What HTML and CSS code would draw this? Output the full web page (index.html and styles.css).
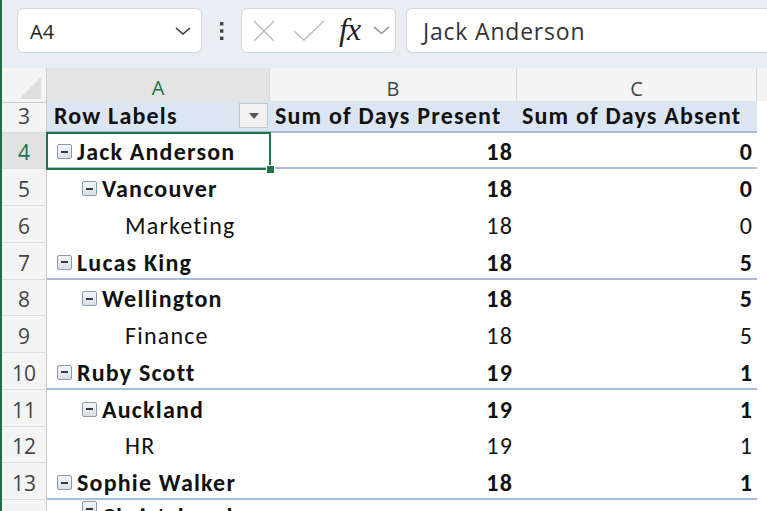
FILE: index.html
```html
<!DOCTYPE html>
<html>
<head>
<meta charset="utf-8">
<link rel="stylesheet" href="styles.css">
</head>
<body>
<div class="app">
  <div class="toolbar">
    <div class="namebox">
      <span class="ref">A4</span>
      <svg class="chev" width="18" height="10" viewBox="0 0 18 10"><path d="M2 2 L9 8 L16 2" fill="none" stroke="#333" stroke-width="1.6"/></svg>
    </div>
    <div class="dots">
      <svg width="6" height="20" viewBox="0 0 6 20"><rect x="1" y="1" width="3.4" height="3.4" fill="#444"/><rect x="1" y="8.3" width="3.4" height="3.4" fill="#444"/><rect x="1" y="15.6" width="3.4" height="3.4" fill="#444"/></svg>
    </div>
    <div class="fxbox">
      <svg class="ic-x" width="24" height="22" viewBox="0 0 24 22"><path d="M2 1 L22 21 M22 1 L2 21" stroke="#b9b9b9" stroke-width="1.3" fill="none"/></svg>
      <svg class="ic-ok" width="32" height="22" viewBox="0 0 32 22"><path d="M1 11 L11 20 L31 1" stroke="#b9b9b9" stroke-width="1.3" fill="none"/></svg>
      <span class="fx">fx</span>
      <svg class="chev2" width="17" height="9" viewBox="0 0 17 9"><path d="M1 1 L8.5 7.5 L16 1" fill="none" stroke="#888" stroke-width="1.3"/></svg>
    </div>
    <div class="formula">Jack Anderson</div>
  </div>

  <div class="sheet">
    <div class="row colhead">
      <div class="corner"><span class="tri"></span></div>
      <div class="ch sel">A</div>
      <div class="ch">B</div>
      <div class="ch">C</div>
      <div class="ch last"></div>
    </div>

    <div class="row r3">
      <div class="rh">3</div>
      <div class="c ph lbl">Row Labels<span class="dd"><svg width="10" height="6" viewBox="0 0 10 6"><path d="M0 0 H10 L5 6 Z" fill="#555"/></svg></span></div>
      <div class="c ph">Sum of Days Present</div>
      <div class="c ph">Sum of Days Absent</div>
      <div class="c e"></div>
    </div>

    <div class="row grp">
      <div class="rh selr">4</div>
      <div class="c b l1 active"><span class="mn"></span>Jack Anderson</div>
      <div class="c b n">18</div>
      <div class="c b n">0</div>
      <div class="c e"></div>
    </div>
    <div class="row">
      <div class="rh">5</div>
      <div class="c b l2"><span class="mn"></span>Vancouver</div>
      <div class="c b n">18</div>
      <div class="c b n">0</div>
      <div class="c e"></div>
    </div>
    <div class="row">
      <div class="rh">6</div>
      <div class="c l3">Marketing</div>
      <div class="c n">18</div>
      <div class="c n">0</div>
      <div class="c e"></div>
    </div>

    <div class="row grp">
      <div class="rh">7</div>
      <div class="c b l1"><span class="mn"></span>Lucas King</div>
      <div class="c b n">18</div>
      <div class="c b n">5</div>
      <div class="c e"></div>
    </div>
    <div class="row">
      <div class="rh">8</div>
      <div class="c b l2"><span class="mn"></span>Wellington</div>
      <div class="c b n">18</div>
      <div class="c b n">5</div>
      <div class="c e"></div>
    </div>
    <div class="row">
      <div class="rh">9</div>
      <div class="c l3">Finance</div>
      <div class="c n">18</div>
      <div class="c n">5</div>
      <div class="c e"></div>
    </div>

    <div class="row grp">
      <div class="rh">10</div>
      <div class="c b l1"><span class="mn"></span>Ruby Scott</div>
      <div class="c b n">19</div>
      <div class="c b n">1</div>
      <div class="c e"></div>
    </div>
    <div class="row">
      <div class="rh">11</div>
      <div class="c b l2"><span class="mn"></span>Auckland</div>
      <div class="c b n">19</div>
      <div class="c b n">1</div>
      <div class="c e"></div>
    </div>
    <div class="row">
      <div class="rh">12</div>
      <div class="c l3">HR</div>
      <div class="c n">19</div>
      <div class="c n">1</div>
      <div class="c e"></div>
    </div>

    <div class="row grp">
      <div class="rh">13</div>
      <div class="c b l1"><span class="mn"></span>Sophie Walker</div>
      <div class="c b n">18</div>
      <div class="c b n">1</div>
      <div class="c e"></div>
    </div>
    <div class="row peek">
      <div class="rh"></div>
      <div class="c b l2"><span class="mn"></span>Christchurch</div>
      <div class="c"></div>
      <div class="c"></div>
      <div class="c e"></div>
    </div>
  </div>
</div>
</body>
</html>
```

FILE: styles.css
```css
html, body {
  margin: 0;
  padding: 0;
  background: #ffffff;
  overflow: hidden;
}

.app {
  width: 767px;
  height: 511px;
  border-left: 2px solid #1f6e43;
  box-sizing: border-box;
  overflow: hidden;
}

/* ---------- toolbar ---------- */
.toolbar {
  height: 68px;
  background: #e9eef2;
  display: flex;
  align-items: flex-start;
  padding: 8px 0 0 15px;
  box-sizing: border-box;
  font-family: "Open Sans", "Noto Sans", sans-serif;
}

.namebox {
  width: 185px;
  height: 45px;
  background: #fff;
  border: 1px solid #d3d7db;
  border-radius: 6px;
  box-sizing: border-box;
  display: flex;
  align-items: center;
  justify-content: space-between;
  padding: 0 9px 0 12px;
}

.ref {
  font-size: 20px;
  color: #222;
  margin-top: 1px;
}

.dots {
  width: 39px;
  height: 45px;
  display: flex;
  align-items: center;
  justify-content: center;
}

.fxbox {
  width: 155px;
  height: 45px;
  background: #fff;
  border: 1px solid #d3d7db;
  border-radius: 6px;
  box-sizing: border-box;
  display: flex;
  align-items: center;
  padding-left: 10px;
}

.ic-x { margin-right: 17px; }
.ic-ok { margin-right: 14px; }

.fx {
  font-family: "Liberation Serif", "DejaVu Serif", serif;
  font-style: italic;
  font-size: 32px;
  color: #222;
  line-height: 1;
  margin-right: 13px;
  margin-top: -3px;
  letter-spacing: -1px;
}

.formula {
  flex: 1;
  height: 45px;
  margin-left: 10px;
  background: #fff;
  border: 1px solid #d3d7db;
  border-right: none;
  border-radius: 6px 0 0 6px;
  box-sizing: border-box;
  display: flex;
  align-items: center;
  padding-left: 16px;
  font-size: 23px;
  letter-spacing: 0.8px;
  color: #333;
}

/* ---------- sheet ---------- */
.sheet {
  font-family: Carlito, Lato, sans-serif;
}

.row {
  display: grid;
  grid-template-columns: 45px 223px 247px 240px 1fr;
  height: 36.75px;
}

.colhead {
  height: 33px;
  font-family: "Open Sans", "Noto Sans", sans-serif;
}

.corner {
  background: #f4f4f4;
  border-right: 1px solid #d0d0d0;
  border-bottom: 1px solid #c8c8c8;
  position: relative;
}

.tri {
  position: absolute;
  right: 5px;
  bottom: 3px;
  width: 0;
  height: 0;
  border-left: 22px solid transparent;
  border-bottom: 22px solid #dedede;
}

.ch {
  background: #f4f4f4;
  border-right: 1px solid #d8d8d8;
  border-bottom: 1px solid #c6c6c6;
  display: flex;
  align-items: center;
  justify-content: center;
  font-size: 20px;
  color: #444;
  box-sizing: border-box;
  padding-top: 6px;
}

.ch.sel {
  background: #e4e4e4;
  color: #217346;
  border-bottom: 2px solid #217346;
}

.ch.last { border-right: none; }

.r3 { height: 31.5px; }

.rh {
  background: #f4f4f4;
  border-right: 1px solid #c8c8c8;
  border-bottom: 1px solid #dcdcdc;
  box-sizing: border-box;
  display: flex;
  align-items: flex-end;
  justify-content: center;
  padding-bottom: 5px;
  font-family: "Open Sans", "Noto Sans", sans-serif;
  font-size: 21px;
  color: #444;
  line-height: 1;
}

.rh.selr {
  background: #e2e2e2;
  color: #217346;
}

.c {
  display: flex;
  align-items: flex-end;
  box-sizing: border-box;
  padding-bottom: 5px;
  font-size: 24px;
  letter-spacing: 1.2px;
  color: #111;
  line-height: 1;
  white-space: nowrap;
  overflow: hidden;
}

.c.e { background: #fff; }

.ph {
  background: #dce6f2;
  font-weight: 700;
  box-shadow: inset 0 -2px #a7bcd9;
  padding-left: 5px;
}

.ph.lbl {
  padding-left: 7px;
  position: relative;
}

.dd {
  position: absolute;
  left: 192px;
  top: 2px;
  width: 29px;
  height: 25px;
  box-sizing: border-box;
  background: #f1f1f1;
  border: 1px solid #c6c6c6;
  display: flex;
  align-items: center;
  justify-content: center;
}

.b { font-weight: 700; }

.n {
  justify-content: flex-end;
  padding-right: 4px;
}

.grp .c:not(.e) { box-shadow: inset 0 -2px #a7bcd9; }

.l1 { padding-left: 10px; }
.l2 { padding-left: 35px; }
.l3 { padding-left: 78px; }

.peek .c {
  align-items: flex-start;
  padding-top: 5px;
  padding-bottom: 0;
}

.peek .mn { margin-bottom: 0; margin-top: -4px; }

.mn {
  width: 15px;
  height: 15px;
  box-sizing: border-box;
  border: 1px solid #8d99ab;
  border-radius: 2px;
  background: linear-gradient(#f4f6fa, #d9dee8);
  margin-right: 5px;
  margin-bottom: 5px;
  position: relative;
  flex: none;
}

.mn::after {
  content: "";
  position: absolute;
  left: 3px;
  right: 3px;
  top: 5.5px;
  height: 2px;
  background: #3a3a3a;
}

.active {
  position: relative;
  overflow: visible;
  outline: 2px solid #217346;
  outline-offset: -1px;
}

.active::after {
  content: "";
  position: absolute;
  right: -5px;
  bottom: -5px;
  width: 7px;
  height: 7px;
  background: #217346;
  border: 1px solid #fff;
  z-index: 2;
}
```
